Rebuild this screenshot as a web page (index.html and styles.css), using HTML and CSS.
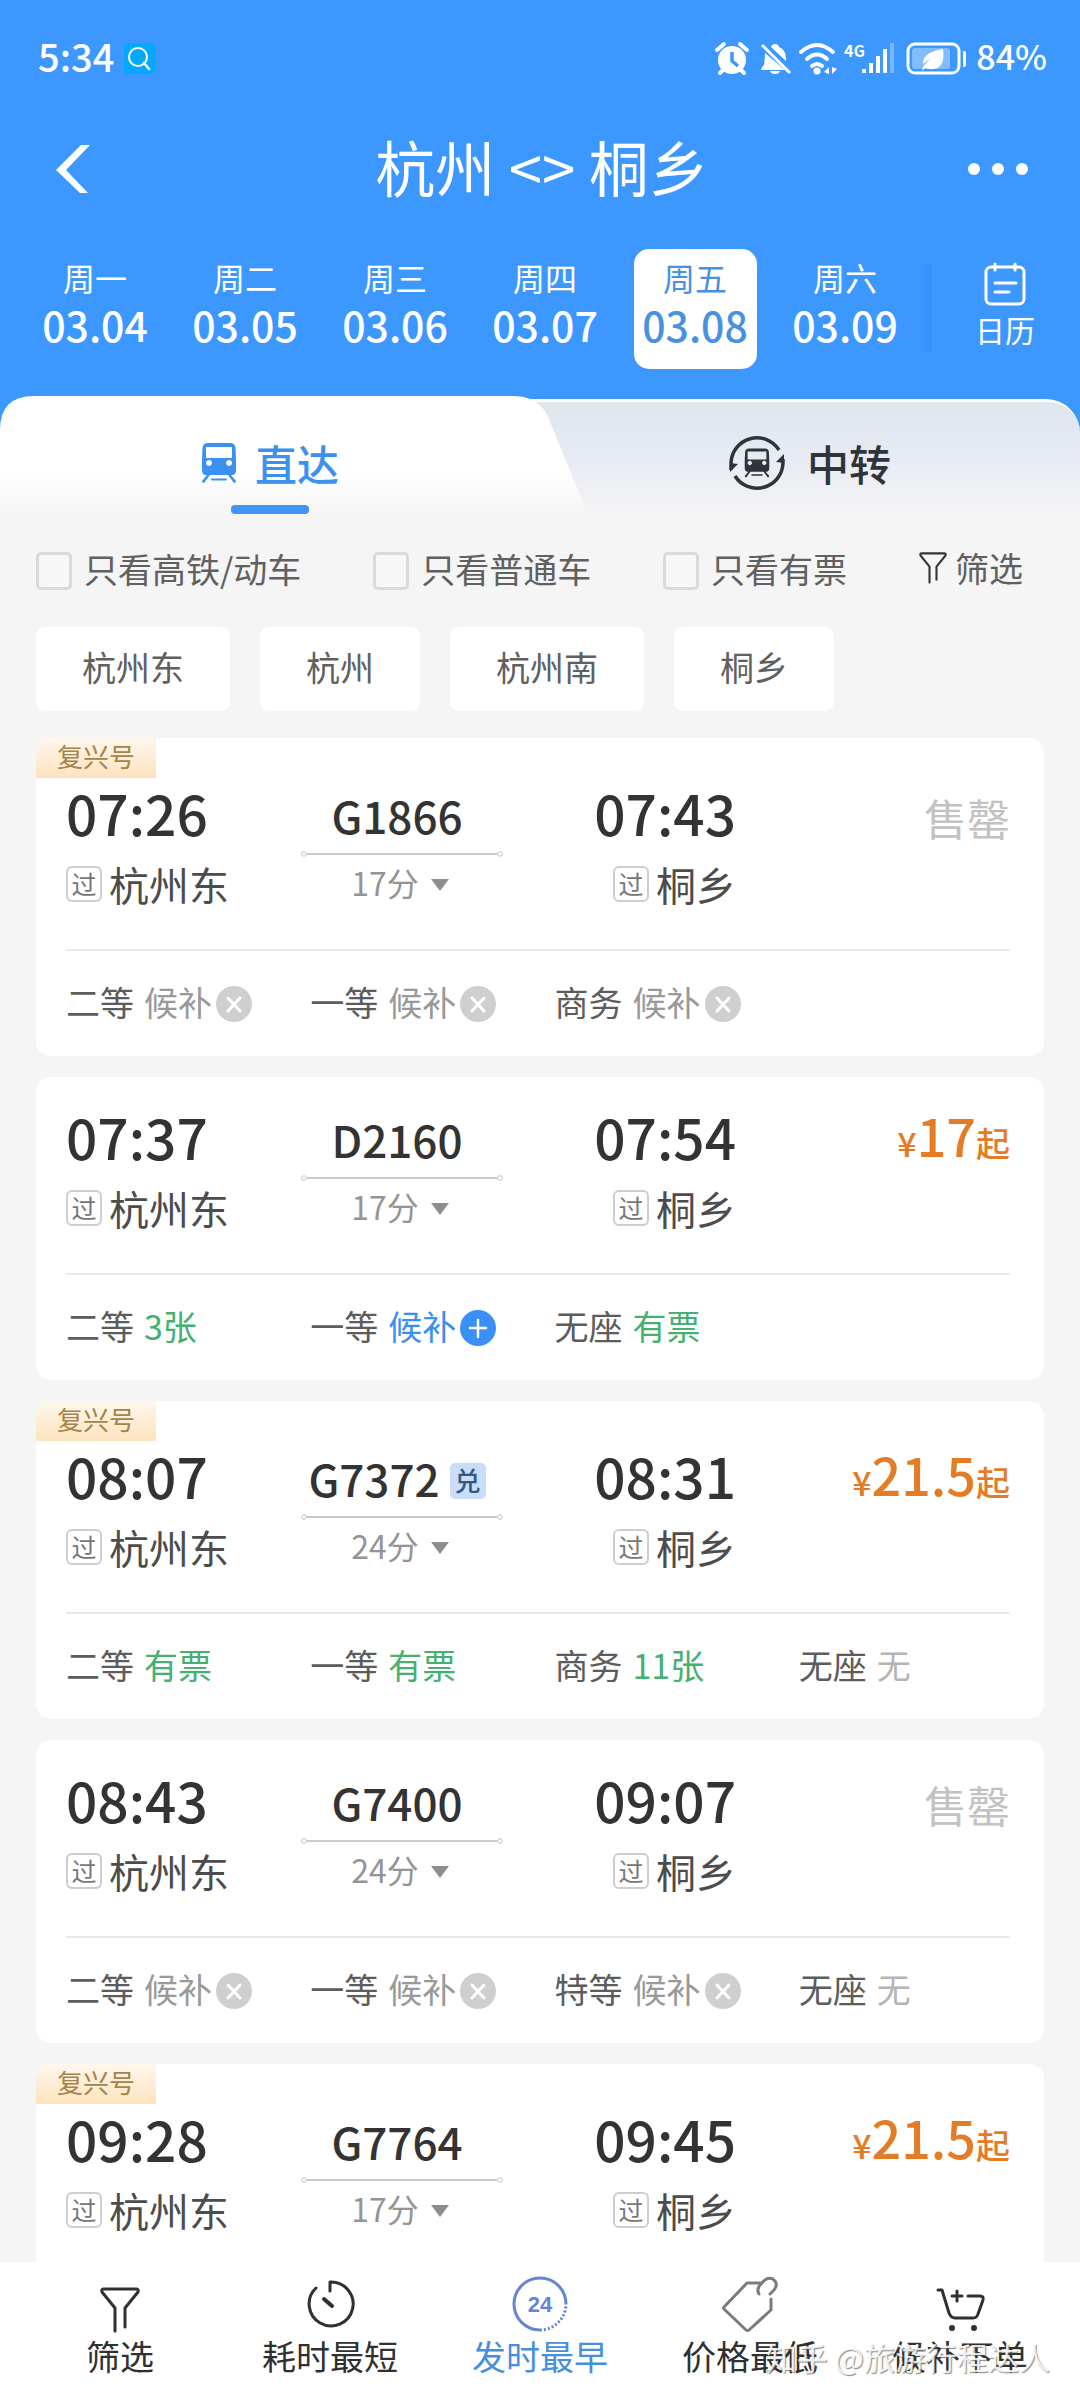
FILE: index.html
```html
<!DOCTYPE html>
<html lang="zh-CN">
<head>
<meta charset="utf-8">
<meta name="viewport" content="width=device-width, initial-scale=1">
<title>杭州 - 桐乡 车票查询</title>
<link rel="stylesheet" href="styles.css">
</head>
<body>
<svg class="defs" aria-hidden="true">
  <symbol id="i-x" viewBox="0 0 36 36"><circle cx="18" cy="18" r="18" fill="#cfcfcf"/><path d="M12 12l12 13M24 12L12 25" stroke="#fff" stroke-width="3" stroke-linecap="round"/></symbol>
  <symbol id="i-plus" viewBox="0 0 36 36"><circle cx="18" cy="18" r="18" fill="#3a90f8"/><path d="M18 10v17M10 18h16" stroke="#fff" stroke-width="2.500" stroke-linecap="round"/></symbol>
  <symbol id="i-span" viewBox="0 0 202 6"><path d="M6 3h190" stroke="#b8b8b8" stroke-width="1.500"/><circle cx="3" cy="3" r="2.300" fill="#fff" stroke="#c0c0c0"/><circle cx="199" cy="3" r="2.300" fill="#fff" stroke="#c0c0c0"/></symbol>
  <symbol id="i-funnel" viewBox="0 0 40 46"><path d="M15 44V21L2 5Q1 2 4 2H36Q39 2 38 5L25 21V40" fill="none" stroke="currentColor" stroke-width="3" stroke-linecap="round" stroke-linejoin="round"/></symbol>
  <symbol id="i-train" viewBox="0 0 36 40"><path d="M7 0h22q5 0 5.500 5L35 18v9q0 5-4 5h-1l5 6q0 2-2 2l-6-8H9l-6 8q-2 0-2-2l5-6H5q-4 0-4-5v-9L1.500 5Q2 0 7 0zM5 4v11h26V4zM8 17a3 3 0 1 0 .1 0zM28 17a3 3 0 1 0 .1 0z" fill="currentColor" fill-rule="evenodd"/><path d="M11 36.500h14" stroke="currentColor" stroke-width="2" stroke-linecap="round"/></symbol>
</svg>

<div class="app">
  <header class="top">
    <div class="status">
      <span class="clock">5:34</span>
      <svg class="search" viewBox="0 0 31 31"><rect width="31" height="31" rx="4" fill="#04a9fe"/><circle cx="14" cy="14" r="9" fill="none" stroke="#fff" stroke-width="2"/><path d="M20 20l5 6" stroke="#fff" stroke-width="2.500" stroke-linecap="round"/></svg>
      <svg class="signals" viewBox="718 40 252 36" fill="#fff">
        <circle cx="734" cy="60" r="14"/><path d="M719 50l7-6M749 50l-7-6" stroke="#fff" stroke-width="4" stroke-linecap="round"/><path d="M725 70l-3 3M743 70l3 3" stroke="#fff" stroke-width="4" stroke-linecap="round"/><path d="M734 52v9l6 5" fill="none" stroke="#3c98fe" stroke-width="3.500"/>
        <path d="M773 47q1-3 4-3t4 3q7 3 7 11v3l-15-14zM767 53l20 17h-24q0-3 3-5 1-6 1-12zM772 71h10q-1 3-5 3t-5-3z"/><path d="M764 45l28 28" stroke="#fff" stroke-width="3"/>
        <path d="M803 52q16-14 32 0M809 59q10-9 20 0M814 66q5-4 10 0" fill="none" stroke="#fff" stroke-width="4" stroke-linecap="round"/><circle cx="819" cy="71" r="3.500"/><path d="M831 67v7l-5-2 5-5zM834 67v7l5-5z"/>
        <path d="M864 69h4v4h-4zM871 63h4v10h-4zM878 56h4v17h-4zM885 49h4v24h-4z"/><path d="M892 43h4v30h-4z" opacity=".3"/>
        <text x="846" y="57" class="net">4G</text>
        <rect x="910" y="44" width="51" height="29" rx="7" fill="none" stroke="#fff" stroke-width="3"/><rect x="914" y="48" width="38" height="21" rx="3" opacity=".35"/><path d="M965 51h1q2 0 2 2v12q0 2-2 2h-1z"/><path d="M945 49q3 22-14 20l-4-1-3 3q0-5 8-12-6 3-7 6-1-8 7-12 5-3 13-4z"/>
      </svg>
      <span class="level">84%</span>
    </div>
    <div class="bar">
      <button class="back" aria-label="返回"><svg viewBox="0 0 34 48"><path d="M25 0h9L10 25l22 23h-8L0 25z" fill="#fff"/></svg></button>
      <h1>杭州 &lt;&gt; 桐乡</h1>
      <button class="more" aria-label="更多"><svg viewBox="0 0 60 12" fill="#fff"><circle cx="6" cy="6" r="6"/><circle cx="30" cy="6" r="6"/><circle cx="54" cy="6" r="6"/></svg></button>
    </div>
    <div class="dates">
      <button class="day">周一<b>03.04</b></button>
      <button class="day">周二<b>03.05</b></button>
      <button class="day">周三<b>03.06</b></button>
      <button class="day">周四<b>03.07</b></button>
      <button class="day on">周五<b>03.08</b></button>
      <button class="day">周六<b>03.09</b></button>
      <button class="cal"><svg viewBox="0 0 42 44" fill="none" stroke="#fff" stroke-width="3" stroke-linecap="round"><rect x="2" y="5" width="38" height="37" rx="5"/><path d="M11 2v6M31 2v6M11 21h21M11 30h14"/></svg>日历</button>
    </div>
  </header>

  <div class="tabs">
    <svg class="shape" viewBox="0 0 588 120" preserveAspectRatio="none">
      <defs><linearGradient id="fade" x1="0" y1="0" x2="0" y2="1"><stop offset=".6" stop-color="#fff"/><stop offset="1" stop-color="#f5f5f5"/></linearGradient></defs>
      <path d="M0 34Q0 0 34 0H512Q538 0 547 20L588 120H0z" fill="url(#fade)"/>
    </svg>
    <button class="tab on"><span><svg class="train"><use href="#i-train"/></svg>直达</span></button>
    <button class="tab"><span><svg class="transfer" viewBox="0 0 56 56"><path d="M2 35V28A26 26 0 0 1 50 15M54 24V28A26 26 0 0 1 6 41" fill="none" stroke="currentColor" stroke-width="3.500"/><path d="M1 37V28l8 1zM55 19v9l-8-1z" fill="currentColor"/><use href="#i-train" x="15" y="12" width="26" height="32"/></svg>中转</span></button>
  </div>

  <div class="filters">
    <label><input type="checkbox">只看高铁/动车</label>
    <label><input type="checkbox">只看普通车</label>
    <label><input type="checkbox">只看有票</label>
    <button class="sift"><svg><use href="#i-funnel"/></svg>筛选</button>
  </div>
  <div class="chips">
    <button>杭州东</button><button>杭州</button><button>杭州南</button><button>桐乡</button>
  </div>

  <main class="list">
    <article class="card">
      <div class="tag">复兴号</div>
      <div class="trip">
        <div class="stop"><time>07:26</time><p><i>过</i>杭州东</p></div>
        <div class="mid"><h2>G1866</h2><svg class="span"><use href="#i-span"/></svg><button>17分</button></div>
        <div class="stop end"><time>07:43</time><p><i>过</i>桐乡</p></div>
        <div class="sold">售罄</div>
      </div>
      <div class="seats">
        <span>二等 <em>候补</em><svg><use href="#i-x"/></svg></span>
        <span>一等 <em>候补</em><svg><use href="#i-x"/></svg></span>
        <span>商务 <em>候补</em><svg><use href="#i-x"/></svg></span>
      </div>
    </article>

    <article class="card">
      <div class="trip">
        <div class="stop"><time>07:37</time><p><i>过</i>杭州东</p></div>
        <div class="mid"><h2>D2160</h2><svg class="span"><use href="#i-span"/></svg><button>17分</button></div>
        <div class="stop end"><time>07:54</time><p><i>过</i>桐乡</p></div>
        <div class="price"><small>¥</small>17<small>起</small></div>
      </div>
      <div class="seats">
        <span>二等 <em class="ok">3张</em></span>
        <span>一等 <em class="wait">候补</em><svg><use href="#i-plus"/></svg></span>
        <span>无座 <em class="ok">有票</em></span>
      </div>
    </article>

    <article class="card">
      <div class="tag">复兴号</div>
      <div class="trip">
        <div class="stop"><time>08:07</time><p><i>过</i>杭州东</p></div>
        <div class="mid"><h2>G7372<i>兑</i></h2><svg class="span"><use href="#i-span"/></svg><button>24分</button></div>
        <div class="stop end"><time>08:31</time><p><i>过</i>桐乡</p></div>
        <div class="price"><small>¥</small>21.5<small>起</small></div>
      </div>
      <div class="seats">
        <span>二等 <em class="ok">有票</em></span>
        <span>一等 <em class="ok">有票</em></span>
        <span>商务 <em class="ok">11张</em></span>
        <span>无座 <em class="none">无</em></span>
      </div>
    </article>

    <article class="card">
      <div class="trip">
        <div class="stop"><time>08:43</time><p><i>过</i>杭州东</p></div>
        <div class="mid"><h2>G7400</h2><svg class="span"><use href="#i-span"/></svg><button>24分</button></div>
        <div class="stop end"><time>09:07</time><p><i>过</i>桐乡</p></div>
        <div class="sold">售罄</div>
      </div>
      <div class="seats">
        <span>二等 <em>候补</em><svg><use href="#i-x"/></svg></span>
        <span>一等 <em>候补</em><svg><use href="#i-x"/></svg></span>
        <span>特等 <em>候补</em><svg><use href="#i-x"/></svg></span>
        <span>无座 <em class="none">无</em></span>
      </div>
    </article>

    <article class="card">
      <div class="tag">复兴号</div>
      <div class="trip">
        <div class="stop"><time>09:28</time><p><i>过</i>杭州东</p></div>
        <div class="mid"><h2>G7764</h2><svg class="span"><use href="#i-span"/></svg><button>17分</button></div>
        <div class="stop end"><time>09:45</time><p><i>过</i>桐乡</p></div>
        <div class="price"><small>¥</small>21.5<small>起</small></div>
      </div>
    </article>
  </main>

  <nav class="sort">
    <button><svg viewBox="0 0 56 56"><use href="#i-funnel" x="8" y="11" width="40" height="46"/></svg>筛选</button>
    <button><svg viewBox="0 0 56 56" fill="none" stroke="currentColor" stroke-width="3" stroke-linecap="round" stroke-linejoin="round"><path d="M28 15V6A22 22 0 1 1 14 12"/><path d="M22 23l8 7" stroke-width="4"/></svg>耗时最短</button>
    <button class="on"><svg viewBox="0 0 56 56" fill="none" stroke="#6485d6" stroke-width="3"><path d="M54 28A26 26 0 1 0 28 54"/><path d="M28 54A26 26 0 0 0 54 28" stroke-dasharray="2 2"/><text x="28" y="36" class="num">24</text></svg>发时最早</button>
    <button><svg viewBox="0 0 56 56" fill="none" stroke="#7b7b7b" stroke-width="3" stroke-linecap="round" stroke-linejoin="round"><path d="M38 7H25L2 31q-1 1 0 2l22 21q2 1 3 0L49 34V23"/><path d="M37 18q-3-5 2-10 6-8 12-5 6 5 1 11l-4 4"/></svg>价格最低</button>
    <button><svg viewBox="0 0 56 56" fill="none" stroke="currentColor" stroke-width="3" stroke-linecap="round" stroke-linejoin="round"><path d="M6 14h4l7 23q2 5 6 5h18q4 0 5-4l5-14q1-4-3-4H36M25 15v10M20 20h10"/><circle cx="20" cy="52" r="1.500"/><circle cx="42" cy="52" r="1.500"/></svg>候补下单</button>
  </nav>
  <div class="mark">知乎 @旅游行程达人</div>
</div>
</body>
</html>
```
FILE: styles.css
```css
* { box-sizing: border-box; }
body { margin: 0; background: #f5f5f5; color: #333; font-family: "Noto Sans CJK SC", "Noto Sans", sans-serif; }
button { margin: 0; padding: 0; border: 0; background: none; color: inherit; font: inherit; }
h1, h2, p { margin: 0; }
i, em { font-style: normal; }
svg { display: block; flex: none; overflow: visible; }
.defs { position: absolute; width: 0; height: 0; }

.app { position: relative; display: flex; flex-direction: column; height: 100vh; overflow: hidden; }

/* Blue header */
.top { flex: none; background: #3c98fe; color: #fff; }
.status { display: flex; align-items: center; height: 116px; padding: 0 33px 0 38px; line-height: 54px; }
.clock { margin-bottom: 4px; font-size: 38px; font-weight: 500; }
.search { width: 31px; height: 31px; margin-left: 10px; }
.signals { width: 252px; height: 36px; margin-left: auto; }
.net { font: 700 16px "Noto Sans CJK SC", sans-serif; }
.level { margin: 0 0 4px 8px; font-size: 34px; font-weight: 500; }
.bar { display: grid; grid-template-columns: 1fr auto 1fr; align-items: center; height: 106px; padding: 0 52px 0 56px; }
.bar h1 { margin-bottom: 6px; font-size: 60px; font-weight: 400; line-height: 80px; }
.back svg { width: 34px; height: 48px; }
.more { justify-self: end; }
.more svg { width: 60px; height: 12px; }
.dates { display: grid; grid-template-columns: repeat(6, 150fr) 160fr; padding: 27px 0 27px 20px; }
.day { justify-self: center; display: flex; flex-direction: column; align-items: center; width: 123px; height: 120px; padding-top: 6px; border-radius: 15px; font-size: 32px; line-height: 44px; }
.day b { font-size: 41px; font-weight: 500; line-height: 50px; }
.day.on { background: #fff; color: #4890e0; }
.cal { display: flex; flex-direction: column; align-items: center; padding: 13px 0 0 10px; font-size: 30px; line-height: 40px; background: linear-gradient(90deg, #3c98fe, #3590f6) 0 16px / 12px 86px no-repeat; }
.cal svg { width: 42px; height: 44px; margin-bottom: 3px; }

/* Direct / transfer tabs */
.tabs { position: relative; flex: none; display: grid; grid-template-columns: 1fr 1fr; background: #3c98fe; }
.tabs::before { content: ""; position: absolute; inset: 3px 0 0; border-top: 3px solid #fff; border-radius: 44px 34px 0 0; background: linear-gradient(#dee6ee, #e6eaf3 45%, #f5f5f5); }
.shape { position: absolute; left: 0; top: 0; width: 54.5%; height: 100%; }
.tab { position: relative; display: flex; flex-direction: column; align-items: center; height: 120px; padding-top: 34px; font-size: 42px; font-weight: 500; color: #2f3439; }
.tab span { display: flex; align-items: center; gap: 22px; height: 66px; line-height: 60px; }
.tab.on { color: #3b90f0; }
.tab.on span { gap: 18px; }
.tab.on::after { content: ""; width: 78px; height: 9px; margin-top: 9px; border-radius: 4px; background: #3f95f4; }
.train { width: 36px; height: 40px; }
.transfer { width: 56px; height: 56px; }

/* Filters */
.filters { flex: none; display: flex; align-items: center; justify-content: space-between; height: 76px; margin-top: 16px; padding: 0 57px 0 36px; font-size: 34px; line-height: 44px; color: #606060; }
.filters label { display: flex; align-items: center; gap: 12px; padding-bottom: 2px; }
.filters input { appearance: none; width: 36px; height: 38px; margin: 4px 0 0; border: 3px solid #dadada; border-radius: 5px; background: #f7f7f7; }
.sift { display: flex; align-items: center; gap: 8px; padding-bottom: 4px; }
.sift svg { width: 28px; height: 32px; color: #333; }
.chips { flex: none; display: flex; gap: 30px; margin-top: 19px; padding: 0 36px; }
.chips button { height: 84px; padding: 0 46px 6px; border-radius: 9px; background: #fff; font-size: 34px; color: #606060; }

/* Train cards */
.list { flex: 1; min-height: 0; overflow: hidden; display: flex; flex-direction: column; gap: 21px; margin-top: 27px; padding: 0 36px; }
.card { flex: none; padding: 29px 34px 0 30px; border-radius: 15px; background: #fff; overflow: hidden; }
.card:has(.tag) { padding-top: 0; }
.tag { width: 120px; height: 40px; margin: 0 0 4px -30px; background: linear-gradient(#fff7ec, #fde3be); font-size: 26px; line-height: 36px; text-align: center; color: #a5834a; }
.trip { display: grid; grid-template-columns: 235fr 202fr 233fr 274fr; height: 169px; border-bottom: 2px solid #e8e8e8; }
.stop time { display: block; font-size: 55px; font-weight: 500; line-height: 60px; }
.stop p { display: flex; align-items: center; gap: 7px; margin-top: 15px; font-size: 40px; line-height: 54px; color: #4c4c4c; }
.stop i { width: 36px; height: 36px; border: 2px solid #cdcdcd; border-radius: 6px; font-size: 25px; line-height: 30px; text-align: center; color: #777; }
.end { justify-self: end; }
.end p { justify-content: flex-end; }
.mid { display: flex; flex-direction: column; align-items: center; }
.mid h2 { display: flex; align-items: center; height: 66px; padding-right: 10px; font-size: 44px; font-weight: 500; }
.mid h2 i { width: 36px; height: 36px; margin: 6px 0 0 10px; border-radius: 5px; background: #c7ddfa; font-size: 26px; line-height: 34px; text-align: center; color: #345780; }
.span { width: 100%; height: 6px; margin-top: 3px; }
.mid button { display: flex; align-items: center; gap: 12px; padding-right: 4px; font-size: 32px; line-height: 50px; color: #949494; }
.mid button::after { content: ""; margin-top: 6px; border: 9px solid transparent; border-top: 12px solid #8e8e8e; border-bottom: 0; }
.sold { justify-self: end; margin-top: 5px; font-size: 43px; line-height: 60px; color: #c2c2c2; }
.price { justify-self: end; font-size: 52px; font-weight: 500; line-height: 58px; color: #e47c25; }
.price small { font-size: 34px; }
.seats { display: grid; grid-template-columns: repeat(4, 1fr); column-gap: 33px; height: 105px; padding-bottom: 4px; font-size: 34px; line-height: 48px; color: #5c5c5c; white-space: nowrap; align-items: center; }
.seats span { display: flex; align-items: center; gap: 10px; }
.seats svg { width: 36px; height: 36px; margin: 4px 0 0 -6px; }
.seats em { color: #999; }
.seats .ok { color: #45b070; }
.seats .wait { color: #3a90f2; }
.seats .none { color: #b4b4b4; }

/* Bottom sort bar */
.sort { flex: none; display: grid; grid-template-columns: repeat(5, 1fr); height: 138px; padding: 14px 15px 0; background: #fff; color: #303030; }
.sort button { display: flex; flex-direction: column; align-items: center; font-size: 34px; line-height: 48px; }
.sort svg { width: 56px; height: 56px; }
.sort .on { color: #468fdc; }
.num { font: 700 22px "Liberation Sans", sans-serif; fill: #6485d6; stroke: none; text-anchor: middle; }
.mark { position: absolute; right: 30px; bottom: 20px; font-size: 31px; line-height: 46px; color: rgba(255, 255, 255, .85); text-shadow: 1px 1px 1px rgba(90, 90, 90, .7); pointer-events: none; }
```
